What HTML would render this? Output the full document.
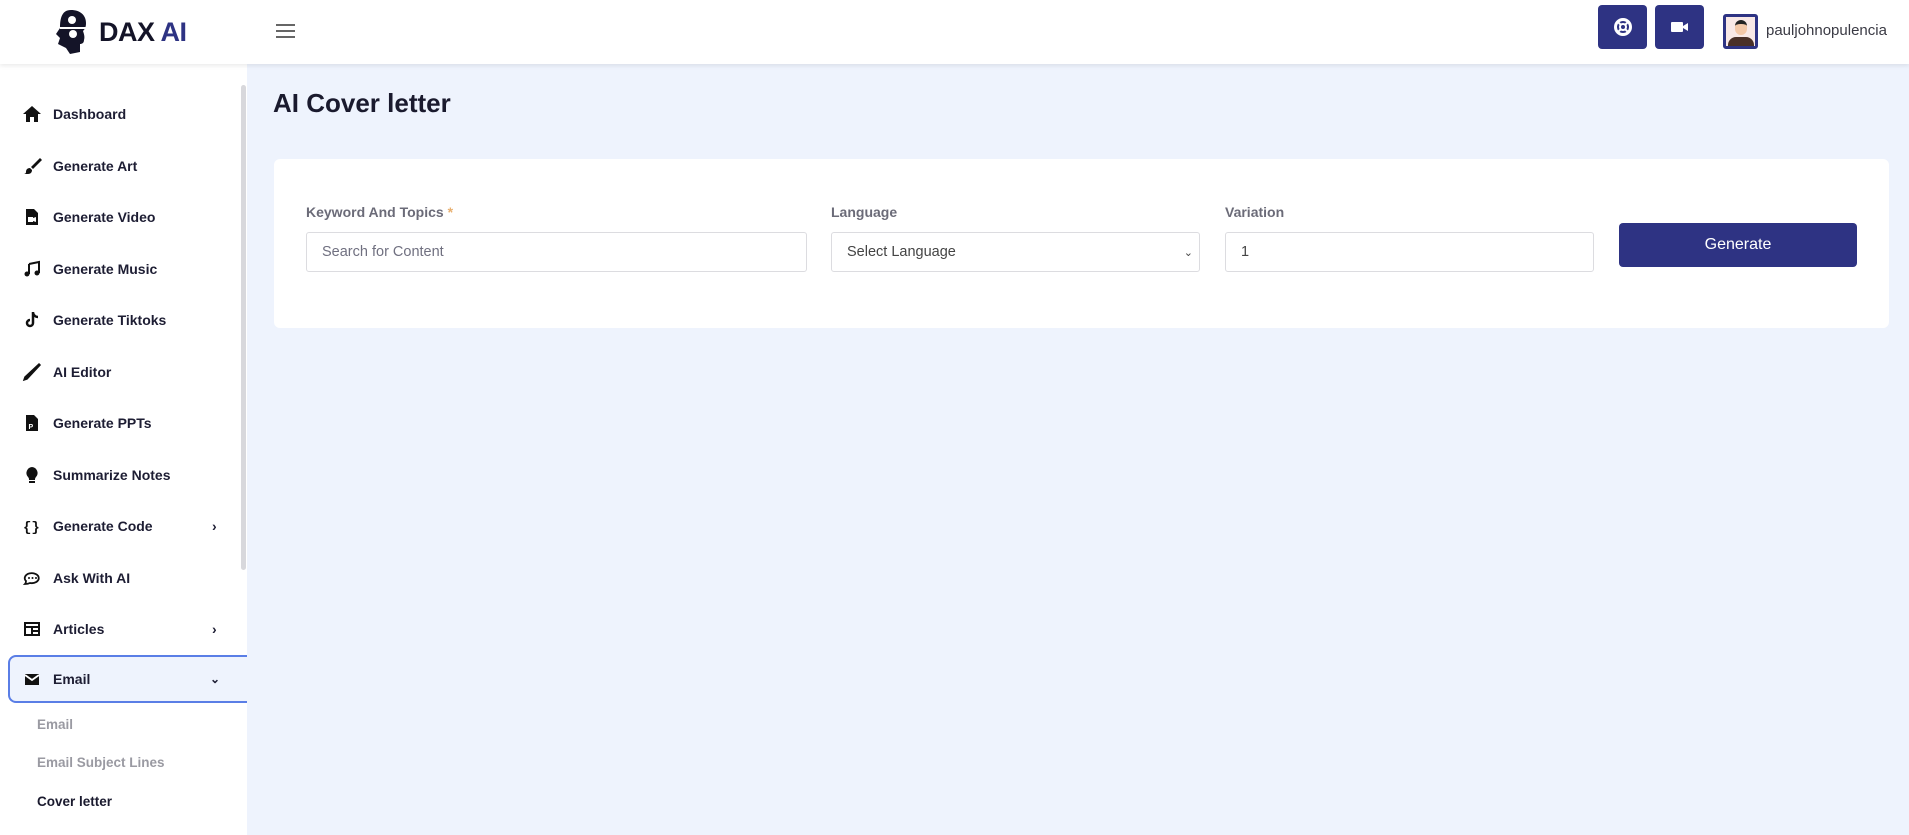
<!DOCTYPE html>
<html><head><meta charset="utf-8"><style>
*{box-sizing:border-box;margin:0;padding:0}
body{width:1909px;height:835px;overflow:hidden;background:#eef3fd;font-family:"Liberation Sans",sans-serif;color:#1a1a2e;position:relative}
.hdr{position:absolute;left:0;top:0;width:1909px;height:64px;background:#fff;box-shadow:0 2px 4px rgba(0,0,0,.08);z-index:2}
.side{position:absolute;left:0;top:64px;width:247px;height:771px;background:#fff}
.scroll{position:absolute;left:241px;top:21px;width:5px;height:485px;background:#d8d8dc;border-radius:3px}
.item{position:absolute;left:0;width:247px;height:40px;display:flex;align-items:center;font-size:14px;font-weight:bold;color:#1d1d33}
.item svg{position:absolute;left:22px;width:20px;height:20px}
.item span{position:absolute;left:53px}
.item .chev{position:absolute;left:212px;font-size:14px}
.sub{position:absolute;left:37px;font-size:13.5px;font-weight:bold;color:#9a9aa2}
.btn{position:absolute;top:5px;width:49px;height:44px;background:#2e3383;border-radius:4px}
.card{position:absolute;left:274px;top:159px;width:1615px;height:169px;background:#fff;border-radius:6px}
.lbl{position:absolute;top:204px;font-size:14px;font-weight:bold;color:#6b6b78}
.inp{position:absolute;top:232px;height:40px;border:1px solid #dcdce0;border-radius:3px;background:#fff;font-size:14.5px;color:#6b6b78;padding:0 15px;display:flex;align-items:center}
</style></head><body>
<div class="hdr">
  <svg style="position:absolute;left:52px;top:8px" width="38" height="48" viewBox="0 0 38 48"><path d="M19 2c9 0 15 5 15 13 0 4-1 6-3 8 1 3 2 6 1 9 0 3-2 4-4 4v8l-10 2-4-6-8-4 2-6-4-4 4-6C8 10 10 2 19 2z" fill="#141428"/><circle cx="20" cy="12" r="4" fill="#fff"/><circle cx="21" cy="26" r="4" fill="#fff"/><path d="M8 20h26" stroke="#fff" stroke-width="2"/></svg>
  <div style="position:absolute;left:99px;top:17px;font-size:27px;font-weight:bold;letter-spacing:-0.5px;color:#141428">DAX <span style="color:#2e3383">AI</span></div>
  <div style="position:absolute;left:276px;top:24px;width:19px;height:2px;background:#666;box-shadow:0 6px 0 #666,0 12px 0 #666"></div>
  <div class="btn" style="left:1598px"><svg style="position:absolute;left:15px;top:12px" width="20" height="20" viewBox="0 0 20 20"><circle cx="10" cy="10" r="7.5" fill="none" stroke="#fff" stroke-width="3"/><circle cx="10" cy="10" r="3" fill="none" stroke="#fff" stroke-width="2"/><path d="M5 5l3 3M15 5l-3 3M5 15l3-3M15 15l-3-3" stroke="#fff" stroke-width="2"/></svg></div>
  <div class="btn" style="left:1655px"><svg style="position:absolute;left:15px;top:15px" width="20" height="14" viewBox="0 0 20 14"><rect x="1" y="2" width="12" height="10" rx="1" fill="#fff"/><path d="M13 6l5-3v8l-5-3z" fill="#fff"/></svg></div>
  <div style="position:absolute;left:1723px;top:14px;width:35px;height:35px;border:3px solid #2e3383;border-radius:3px;background:#f8e8e6;overflow:hidden"><div style="position:absolute;left:9px;top:3px;width:12px;height:15px;background:#f3c8a8;border-radius:6px;border-top:4px solid #222"></div><div style="position:absolute;left:2px;top:20px;width:26px;height:14px;background:#4a3028;border-radius:8px 8px 0 0"></div></div>
  <div style="position:absolute;left:1766px;top:22px;font-size:15px;color:#3a3a44">pauljohnopulencia</div>
</div>
<div class="side">
  <div class="scroll"></div>
</div>
<div class="item" style="top:94px"><svg viewBox="0 0 20 20"><path d="M10 2L1 10h3v8h4v-5h4v5h4v-8h3z" fill="#111"/></svg><span>Dashboard</span></div>
<div class="item" style="top:146px"><svg viewBox="0 0 20 20"><path d="M18 2L9 11l2 2 9-9zM8 12c-3 0-4 2-4 4s-2 2-3 2h5c3 0 4-2 4-4z" fill="#111"/></svg><span>Generate Art</span></div>
<div class="item" style="top:197px"><svg viewBox="0 0 20 20"><path d="M4 2h8l4 4v12H4z" fill="#111"/><rect x="6" y="10" width="5" height="5" fill="#fff"/><path d="M11 11l3-1v5l-3-1z" fill="#fff"/></svg><span>Generate Video</span></div>
<div class="item" style="top:249px"><svg viewBox="0 0 20 20"><path d="M7 5l10-2v11" stroke="#111" stroke-width="2" fill="none"/><path d="M7 5v10" stroke="#111" stroke-width="2"/><circle cx="5" cy="15" r="2.5" fill="#111"/><circle cx="15" cy="14" r="2.5" fill="#111"/></svg><span>Generate Music</span></div>
<div class="item" style="top:300px"><svg viewBox="0 0 20 20"><path d="M11 2v11a3 3 0 1 1-3-3" stroke="#111" stroke-width="2.5" fill="none"/><path d="M11 3c1 3 3 4 5 4" stroke="#111" stroke-width="2.5" fill="none"/></svg><span>Generate Tiktoks</span></div>
<div class="item" style="top:352px"><svg viewBox="0 0 20 20"><path d="M17 2l1 1L5 17l-3 1 1-3z" fill="#111" stroke="#111" stroke-width="1.5"/></svg><span>AI Editor</span></div>
<div class="item" style="top:403px"><svg viewBox="0 0 20 20"><path d="M4 2h8l4 4v12H4z" fill="#111"/><text x="6.5" y="16" font-size="7" font-weight="bold" fill="#fff" font-family="Liberation Sans">P</text></svg><span>Generate PPTs</span></div>
<div class="item" style="top:455px"><svg viewBox="0 0 20 20"><path d="M10 2a6 6 0 0 0-4 10c1 1 1 2 1 3h6c0-1 0-2 1-3a6 6 0 0 0-4-10z" fill="#111"/><rect x="7" y="16" width="6" height="2" fill="#111"/></svg><span>Summarize Notes</span></div>
<div class="item" style="top:506px"><svg viewBox="0 0 20 20"><text x="1" y="15" font-size="14" fill="#111" font-family="Liberation Mono">{}</text></svg><span>Generate Code</span><b class="chev">›</b></div>
<div class="item" style="top:558px"><svg viewBox="0 0 20 20"><path d="M3 16c1-1 1-2 1-3A7 5 0 1 1 8 15c-2 1-4 1-5 1z" stroke="#111" stroke-width="1.8" fill="none"/><circle cx="7" cy="10" r="1" fill="#111"/><circle cx="10.5" cy="10" r="1" fill="#111"/><circle cx="14" cy="10" r="1" fill="#111"/></svg><span>Ask With AI</span></div>
<div class="item" style="top:609px"><svg viewBox="0 0 20 20"><rect x="3" y="4" width="14" height="12" fill="none" stroke="#111" stroke-width="2"/><path d="M3 8h14M10 8v8M10 12h7" stroke="#111" stroke-width="2"/></svg><span>Articles</span><b class="chev">›</b></div>
<div style="position:absolute;left:8px;top:655px;width:239px;height:48px;border:2px solid #5a7ee6;border-right:none;border-radius:8px 0 0 8px;background:#eef3fd"></div>
<div class="item" style="top:659px"><svg viewBox="0 0 20 20"><rect x="3" y="5" width="14" height="11" fill="#111"/><path d="M3 6l7 5 7-5" stroke="#fff" stroke-width="1.8" fill="none"/></svg><span>Email</span><b class="chev" style="left:210px;font-size:12px">⌄</b></div>
<div class="sub" style="top:717px">Email</div>
<div class="sub" style="top:755px">Email Subject Lines</div>
<div class="sub" style="top:794px;color:#1a1a2e">Cover letter</div>

<div style="position:absolute;left:273px;top:88px;font-size:26px;font-weight:bold;color:#1a1a2e">AI Cover letter</div>
<div class="card"></div>
<div class="lbl" style="left:306px">Keyword And Topics <span style="color:#e8b070">*</span></div>
<div class="inp" style="left:306px;width:501px;color:#707080">Search for Content</div>
<div class="lbl" style="left:831px">Language</div>
<div class="inp" style="left:831px;width:369px;color:#444">Select Language<span style="position:absolute;right:6px;font-size:11px">⌄</span></div>
<div class="lbl" style="left:1225px">Variation</div>
<div class="inp" style="left:1225px;width:369px;color:#444">1</div>
<div style="position:absolute;left:1619px;top:223px;width:238px;height:44px;background:#2e3383;border-radius:4px;color:#fff;font-size:16px;display:flex;align-items:center;justify-content:center">Generate</div>
</body></html>
